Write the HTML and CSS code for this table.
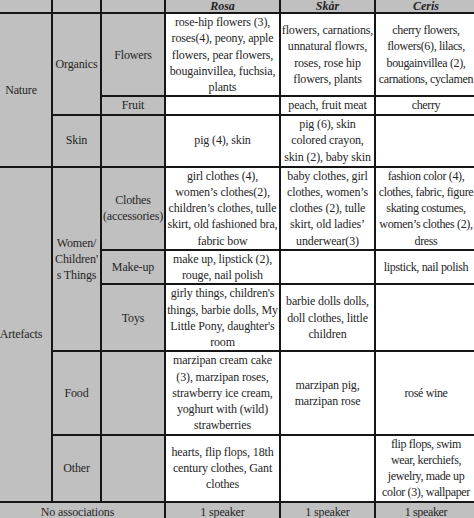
FILE: index.html
```html
<!DOCTYPE html>
<html>
<head>
<meta charset="utf-8">
<link rel="stylesheet" href="styles.css">
</head>
<body>
<div class="frame">
<table class="assoc">
  <colgroup>
    <col class="c1"><col class="c2"><col class="c3"><col class="c4"><col class="c5"><col class="c6">
  </colgroup>
  <thead>
    <tr class="head">
      <th class="g"></th><th class="g"></th><th class="g"></th>
      <th class="g name">Rosa</th><th class="g name">Skår</th><th class="g name">Ceris</th>
    </tr>
  </thead>
  <tbody>
    <tr>
      <td class="g" rowspan="3">Nature</td>
      <td class="g" rowspan="2">Organics</td>
      <td class="g">Flowers</td>
      <td>rose-hip flowers (3),<br>roses(4), peony, apple<br>flowers, pear flowers,<br>bougainvillea, fuchsia,<br>plants</td>
      <td>flowers, carnations,<br>unnatural flowrs,<br>roses, rose hip<br>flowers, plants</td>
      <td>cherry flowers,<br>flowers(6), lilacs,<br>bougainvillea (2),<br>carnations, cyclamen</td>
    </tr>
    <tr>
      <td class="g">Fruit</td>
      <td></td>
      <td>peach, fruit meat</td>
      <td>cherry</td>
    </tr>
    <tr class="skin">
      <td class="g">Skin</td>
      <td class="g"></td>
      <td>pig (4), skin</td>
      <td>pig (6), skin<br>colored crayon,<br>skin (2), baby skin</td>
      <td></td>
    </tr>
    <tr>
      <td class="g" rowspan="5">Artefacts</td>
      <td class="g" rowspan="3">Women/<br>Children'<br>s Things</td>
      <td class="g">Clothes<br>(accessories)</td>
      <td>girl clothes (4),<br>women’s clothes(2),<br>children’s clothes, tulle<br>skirt, old fashioned bra,<br>fabric bow</td>
      <td>baby clothes, girl<br>clothes, women’s<br>clothes (2), tulle<br>skirt, old ladies’<br>underwear(3)</td>
      <td>fashion color (4),<br>clothes, fabric, figure<br>skating costumes,<br>women’s clothes (2),<br>dress</td>
    </tr>
    <tr>
      <td class="g">Make-up</td>
      <td>make up, lipstick (2),<br>rouge, nail polish</td>
      <td></td>
      <td>lipstick, nail polish</td>
    </tr>
    <tr>
      <td class="g">Toys</td>
      <td>girly things, children's<br>things, barbie dolls, My<br>Little Pony, daughter's<br>room</td>
      <td>barbie dolls dolls,<br>doll clothes, little<br>children</td>
      <td></td>
    </tr>
    <tr>
      <td class="g">Food</td>
      <td class="g"></td>
      <td>marzipan cream cake<br>(3), marzipan roses,<br>strawberry ice cream,<br>yoghurt with (wild)<br>strawberries</td>
      <td>marzipan pig,<br>marzipan rose</td>
      <td>rosé wine</td>
    </tr>
    <tr>
      <td class="g">Other</td>
      <td class="g"></td>
      <td>hearts, flip flops, 18th<br>century clothes, Gant<br>clothes</td>
      <td></td>
      <td>flip flops, swim<br>wear, kerchiefs,<br>jewelry, made up<br>color (3), wallpaper</td>
    </tr>
    <tr class="foot">
      <td class="g" colspan="3">No associations</td>
      <td class="g">1 speaker</td>
      <td class="g">1 speaker</td>
      <td class="g">1 speaker</td>
    </tr>
  </tbody>
</table>
</div>
</body>
</html>
```
FILE: styles.css
```css
html, body {
  margin: 0;
  padding: 0;
  background: #ffffff;
  overflow: hidden;
}
.frame {
  width: 474px;
  height: 518px;
  overflow: hidden;
}
.assoc {
  border-collapse: collapse;
  table-layout: fixed;
  width: 486px;
  margin-left: -11px;
  margin-top: 0;
  font-family: "Liberation Serif", "DejaVu Serif", serif;
  font-size: 12px;
  line-height: 16.25px;
  color: #262626;
}
.assoc th, .assoc td {
  font-family: "Liberation Serif", "DejaVu Serif", serif;
  border: 2px solid #161616;
  padding: 0;
  text-align: center;
  vertical-align: middle;
  white-space: nowrap;
  letter-spacing: -0.15px;
  background: #ffffff;
}
.assoc td:last-child, .assoc th:last-child {
  border-right: 0;
  letter-spacing: -0.35px;
}
.c1 { width: 62px; }
.c2 { width: 49px; }
.c3 { width: 64px; }
.c4 { width: 115px; }
.c5 { width: 95px; }
.c6 { width: 101px; }
.assoc .g {
  background: #c0c0c0;
}
.assoc .head th {
  border-top: 0;
  height: 12px;
  line-height: 12px;
  font-weight: bold;
  font-style: italic;
  letter-spacing: 0;
}
.skin td {
  height: 50px;
}
.foot td {
  height: 20px;
}
```
